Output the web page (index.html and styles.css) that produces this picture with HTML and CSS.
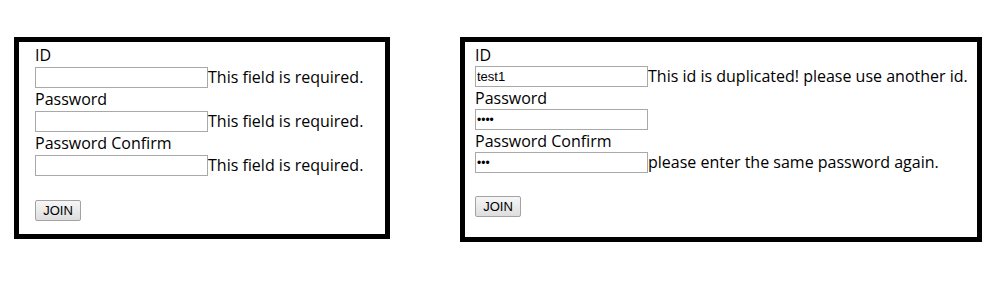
FILE: index.html
```html
<!DOCTYPE html>
<html>
<head>
<meta charset="utf-8">
<link rel="stylesheet" href="styles.css">
</head>
<body>
<div class="page">
  <form class="box box-left">
    <div class="field">
      <label class="label">ID</label>
      <div class="row"><input class="input" type="text"><span class="msg">This field is required.</span></div>
    </div>
    <div class="field">
      <label class="label">Password</label>
      <div class="row"><input class="input" type="password"><span class="msg">This field is required.</span></div>
    </div>
    <div class="field">
      <label class="label">Password Confirm</label>
      <div class="row"><input class="input" type="password"><span class="msg">This field is required.</span></div>
    </div>
    <div class="actions"><button class="btn" type="button">JOIN</button></div>
  </form>
  <form class="box box-right">
    <div class="field">
      <label class="label">ID</label>
      <div class="row"><input class="input" type="text" value="test1"><span class="msg">This id is duplicated! please use another id.</span></div>
    </div>
    <div class="field">
      <label class="label">Password</label>
      <div class="row"><input class="input" type="password" value="1234"></div>
    </div>
    <div class="field">
      <label class="label">Password Confirm</label>
      <div class="row"><input class="input" type="password" value="123"><span class="msg">please enter the same password again.</span></div>
    </div>
    <div class="actions"><button class="btn" type="button">JOIN</button></div>
  </form>
</div>
</body>
</html>
```
FILE: styles.css
```css
html, body {
  margin: 0;
  padding: 0;
  background: #fff;
}
.page {
  display: flex;
  align-items: flex-start;
  gap: 70px;
  padding: 37px 0 0 14px;
  font-family: "Open Sans", "Noto Sans CJK KR", sans-serif;
  font-size: 16px;
  color: #000;
}
.box {
  box-sizing: border-box;
  border: 5px solid #000;
  margin: 0;
  padding: 2px 16px 0 16px;
}
.box-left {
  width: 376px;
  height: 202px;
}
.box-right {
  width: 522px;
  height: 205px;
  padding-left: 10px;
  padding-top: 2px;
}
.field {
  display: flex;
  flex-direction: column;
}
.label {
  display: block;
  height: 23px;
  line-height: 23px;
}
.box-right .label {
  height: 22px;
  line-height: 22px;
}
.row {
  display: flex;
  align-items: center;
  height: 21px;
}
.input {
  box-sizing: border-box;
  width: 173px;
  height: 21px;
  margin: 0;
  padding: 1px 1px;
  border: 1px solid #a9a9a9;
  font-family: "Liberation Sans", Arial, sans-serif;
  font-size: 13px;
  color: #000;
  background: #fff;
  outline: none;
}
.input[type=password] {
  font-size: 12px;
  letter-spacing: 0;
}
.msg {
  line-height: 21px;
  white-space: nowrap;
}
.actions {
  padding-top: 22px;
}
.box-right .actions {
  padding-top: 21px;
}
.btn {
  box-sizing: border-box;
  width: 46px;
  height: 21px;
  margin: 0;
  padding: 0;
  border: 1px solid #a3a3a3;
  border-radius: 2px;
  background: linear-gradient(#f6f6f6, #dedede);
  font-family: "Liberation Sans", Arial, sans-serif;
  font-size: 13px;
  color: #000;
}
```
